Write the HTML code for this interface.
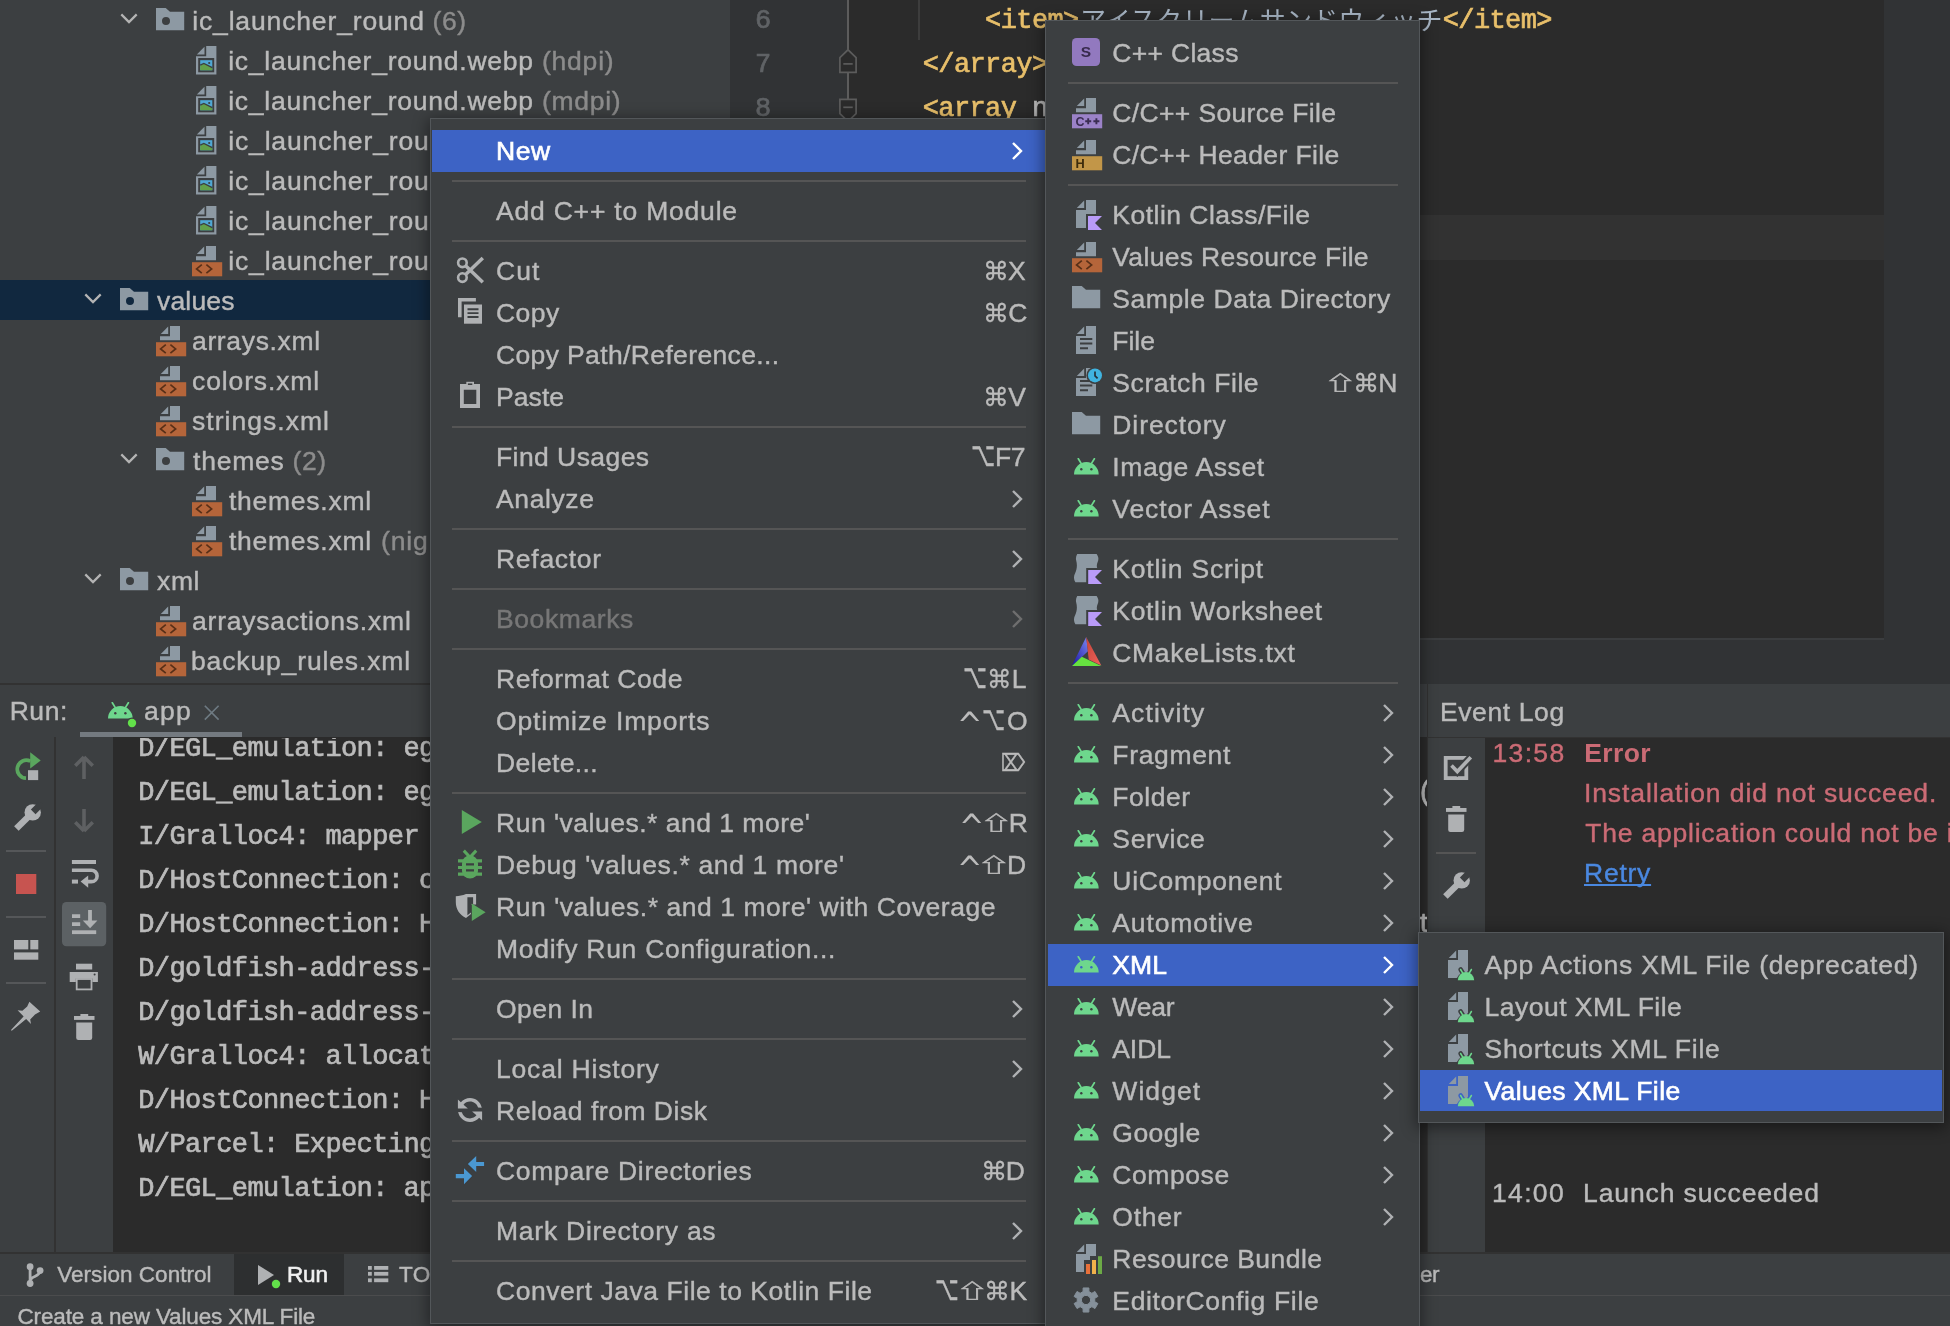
<!DOCTYPE html>
<html><head><meta charset="utf-8"><title>Android Studio</title>
<style>
html,body{margin:0;padding:0;background:#3c3f41;overflow:hidden;}
#root{position:relative;width:1950px;height:1326px;overflow:hidden;background:#3c3f41;font-family:'Liberation Sans', 'DejaVu Sans', sans-serif;will-change:transform;}
#root div,#root svg,#root span{position:absolute;}
#root div div, #root div span, #root div svg{position:absolute;}
.t{white-space:pre;line-height:40px;height:40px;-webkit-text-stroke:.42px;}
.g{white-space:pre;}
</style></head><body><div id="root">
<div style="left:0px;top:0px;width:730px;height:684px;background:#3c3f41;"></div>
<div style="left:0px;top:280px;width:730px;height:40px;background:#11283f;"></div>
<span class="t" style="left:192.20px;top:1.12px;font-size:26.5px;color:#bbbbbb;letter-spacing:0.856px;">ic_launcher_round</span>
<span class="t" style="left:432.60px;top:1.12px;font-size:26.5px;color:#8c8c8c;letter-spacing:0.500px;">(6)</span>
<span class="t" style="left:228.20px;top:41.12px;font-size:26.5px;color:#bbbbbb;letter-spacing:0.767px;">ic_launcher_round.webp</span>
<span class="t" style="left:541.90px;top:41.12px;font-size:26.5px;color:#8c8c8c;letter-spacing:0.800px;">(hdpi)</span>
<span class="t" style="left:228.20px;top:81.12px;font-size:26.5px;color:#bbbbbb;letter-spacing:0.767px;">ic_launcher_round.webp</span>
<span class="t" style="left:541.90px;top:81.12px;font-size:26.5px;color:#8c8c8c;letter-spacing:0.740px;">(mdpi)</span>
<span class="t" style="left:228.20px;top:121.12px;font-size:26.5px;color:#bbbbbb;letter-spacing:0.856px;">ic_launcher_round</span>
<span class="t" style="left:458.00px;top:121.12px;font-size:26.5px;color:#8c8c8c;letter-spacing:0.850px;">.webp (xhdpi)</span>
<span class="t" style="left:228.20px;top:161.12px;font-size:26.5px;color:#bbbbbb;letter-spacing:0.856px;">ic_launcher_round</span>
<span class="t" style="left:458.00px;top:161.12px;font-size:26.5px;color:#8c8c8c;letter-spacing:0.850px;">.webp (xxhdpi)</span>
<span class="t" style="left:228.20px;top:201.12px;font-size:26.5px;color:#bbbbbb;letter-spacing:0.856px;">ic_launcher_round</span>
<span class="t" style="left:458.00px;top:201.12px;font-size:26.5px;color:#8c8c8c;letter-spacing:0.850px;">.webp (xxxhdpi)</span>
<span class="t" style="left:228.20px;top:241.12px;font-size:26.5px;color:#bbbbbb;letter-spacing:0.856px;">ic_launcher_round</span>
<span class="t" style="left:458.00px;top:241.12px;font-size:26.5px;color:#8c8c8c;letter-spacing:0.850px;">.xml (anydpi-v26)</span>
<span class="t" style="left:157.00px;top:281.12px;font-size:26.5px;color:#bbbbbb;letter-spacing:0.180px;">values</span>
<span class="t" style="left:192.00px;top:321.12px;font-size:26.5px;color:#bbbbbb;letter-spacing:0.656px;">arrays.xml</span>
<span class="t" style="left:192.00px;top:361.12px;font-size:26.5px;color:#bbbbbb;letter-spacing:0.878px;">colors.xml</span>
<span class="t" style="left:192.00px;top:401.12px;font-size:26.5px;color:#bbbbbb;letter-spacing:1.030px;">strings.xml</span>
<span class="t" style="left:193.00px;top:441.12px;font-size:26.5px;color:#bbbbbb;letter-spacing:0.780px;">themes</span>
<span class="t" style="left:292.60px;top:441.12px;font-size:26.5px;color:#8c8c8c;letter-spacing:0.500px;">(2)</span>
<span class="t" style="left:229.00px;top:481.12px;font-size:26.5px;color:#bbbbbb;letter-spacing:0.733px;">themes.xml</span>
<span class="t" style="left:229.00px;top:521.12px;font-size:26.5px;color:#bbbbbb;letter-spacing:0.733px;">themes.xml</span>
<span class="t" style="left:381.00px;top:521.12px;font-size:26.5px;color:#8c8c8c;letter-spacing:0.850px;">(night)</span>
<span class="t" style="left:157.00px;top:561.12px;font-size:26.5px;color:#bbbbbb;letter-spacing:0.650px;">xml</span>
<span class="t" style="left:192.00px;top:601.12px;font-size:26.5px;color:#bbbbbb;letter-spacing:0.788px;">arraysactions.xml</span>
<span class="t" style="left:191.00px;top:641.12px;font-size:26.5px;color:#bbbbbb;letter-spacing:0.860px;">backup_rules.xml</span>
<div style="left:730px;top:0px;width:118px;height:639px;background:#313335;"></div>
<div style="left:848px;top:0px;width:1036px;height:639px;background:#2b2b2b;"></div>
<div style="left:848px;top:215px;width:1036px;height:45px;background:#323232;"></div>
<div style="left:1884px;top:0px;width:66px;height:684px;background:#313335;"></div>
<div style="left:730px;top:639px;width:1154px;height:45px;background:#313335;"></div>
<div style="left:730px;top:638px;width:1154px;height:1.5px;background:#3b3d3f;"></div>
<div style="left:847.3px;top:0px;width:1.5px;height:118px;background:#5c5c5c;"></div>
<div style="left:918.4px;top:0px;width:1.2px;height:39.5px;background:#3d3d3d;"></div>
<svg style="left:836px;top:46px" width="24" height="74" viewBox="0 0 24 74"><path d="M3.9 26.4V11.6L12 3.8l8.1 7.8v14.8z" fill="#2b2b2b" stroke="#5c5c5c" stroke-width="1.7"/><path d="M7.3 17.9h9.4" stroke="#5c5c5c" stroke-width="1.7"/><path d="M3.9 53.4v14.2l8.1 7.8 8.1-7.8V53.4z" fill="#2b2b2b" stroke="#5c5c5c" stroke-width="1.7"/><path d="M7.3 61.3h9.4" stroke="#5c5c5c" stroke-width="1.7"/></svg>
<span class="t" style="left:755.00px;top:1.10px;font-size:27px;color:#606366;letter-spacing:-0.603px;font-family:'Liberation Mono', 'Noto Sans CJK JP', monospace;-webkit-text-stroke:.7px;">6</span>
<span class="t" style="left:755.00px;top:45.10px;font-size:27px;color:#606366;letter-spacing:-0.603px;font-family:'Liberation Mono', 'Noto Sans CJK JP', monospace;-webkit-text-stroke:.7px;">7</span>
<span class="t" style="left:755.00px;top:89.10px;font-size:27px;color:#606366;letter-spacing:-0.603px;font-family:'Liberation Mono', 'Noto Sans CJK JP', monospace;-webkit-text-stroke:.7px;">8</span>
<span class="t" style="left:985.10px;top:1.10px;font-size:27px;color:#e8bf6a;letter-spacing:-0.603px;font-family:'Liberation Mono', 'Noto Sans CJK JP', monospace;-webkit-text-stroke:.7px;">&lt;item&gt;</span>
<span class="t" style="left:1080.00px;top:-0.71px;font-size:26px;color:#a9b7c6;letter-spacing:0.100px;font-family:'Noto Sans CJK JP', sans-serif;-webkit-text-stroke:0;">アイスクリームサンドウィッチ</span>
<span class="t" style="left:1442.70px;top:1.10px;font-size:27px;color:#e8bf6a;letter-spacing:-0.603px;font-family:'Liberation Mono', 'Noto Sans CJK JP', monospace;-webkit-text-stroke:.7px;">&lt;/item&gt;</span>
<span class="t" style="left:922.70px;top:45.10px;font-size:27px;color:#e8bf6a;letter-spacing:-0.603px;font-family:'Liberation Mono', 'Noto Sans CJK JP', monospace;-webkit-text-stroke:.7px;">&lt;/array&gt;</span>
<span class="t" style="left:922.70px;top:89.10px;font-size:27px;color:#e8bf6a;letter-spacing:-0.603px;font-family:'Liberation Mono', 'Noto Sans CJK JP', monospace;-webkit-text-stroke:.7px;">&lt;array</span>
<span class="t" style="left:1031.90px;top:89.10px;font-size:27px;color:#bababa;letter-spacing:-0.603px;font-family:'Liberation Mono', 'Noto Sans CJK JP', monospace;-webkit-text-stroke:.7px;">name=&quot;icecream_actions&quot;&gt;</span>
<div style="left:0px;top:683px;width:1420px;height:1.5px;background:#323232;"></div>
<div style="left:0px;top:684.5px;width:1420px;height:52px;background:#3c3f41;"></div>
<div style="left:0px;top:736.5px;width:1420px;height:1px;background:#323232;"></div>
<span class="t" style="left:9.70px;top:691.12px;font-size:26.5px;color:#bbbbbb;letter-spacing:0.533px;">Run:</span>
<span class="t" style="left:144.00px;top:691.12px;font-size:26.5px;color:#bbbbbb;letter-spacing:1.250px;">app</span>
<div style="left:80px;top:732.2px;width:162px;height:5.6px;background:#747a80;"></div>
<div style="left:0px;top:737px;width:113px;height:515px;background:#3c3f41;"></div>
<div style="left:54px;top:737px;width:1.5px;height:515px;background:#323232;"></div>
<div style="left:112.5px;top:737px;width:1314.5px;height:515px;background:#2b2b2b;"></div>
<div style="left:113px;top:738px;width:1314px;height:514px;overflow:hidden">
<span class="t" style="left:25.20px;top:-8.90px;font-size:27px;color:#bbbbbb;letter-spacing:-0.603px;font-family:'Liberation Mono', 'Noto Sans CJK JP', monospace;-webkit-text-stroke:.7px;">D/EGL_emulation: eglMakeCurrent: 0xf0b5e1c0: ver 2 0 (tinfo 0xf0ea3e50)</span>
<span class="t" style="left:25.20px;top:35.10px;font-size:27px;color:#bbbbbb;letter-spacing:-0.603px;font-family:'Liberation Mono', 'Noto Sans CJK JP', monospace;-webkit-text-stroke:.7px;">D/EGL_emulation: eglCreateContext: 0xf0b5e230: maj 2 min 0 rcv 2 share_ctx 0x0 ver(first</span>
<span class="t" style="left:25.20px;top:79.10px;font-size:27px;color:#bbbbbb;letter-spacing:-0.603px;font-family:'Liberation Mono', 'Noto Sans CJK JP', monospace;-webkit-text-stroke:.7px;">I/Gralloc4: mapper 4.x is not supported</span>
<span class="t" style="left:25.20px;top:123.10px;font-size:27px;color:#bbbbbb;letter-spacing:-0.603px;font-family:'Liberation Mono', 'Noto Sans CJK JP', monospace;-webkit-text-stroke:.7px;">D/HostConnection: createUnique: call</span>
<span class="t" style="left:25.20px;top:167.10px;font-size:27px;color:#bbbbbb;letter-spacing:-0.603px;font-family:'Liberation Mono', 'Noto Sans CJK JP', monospace;-webkit-text-stroke:.7px;">D/HostConnection: HostConnection::get() New Host Connection established 0xf0b5e460tid</span>
<span class="t" style="left:25.20px;top:211.10px;font-size:27px;color:#bbbbbb;letter-spacing:-0.603px;font-family:'Liberation Mono', 'Noto Sans CJK JP', monospace;-webkit-text-stroke:.7px;">D/goldfish-address-space: allocate: Ask for block of size 0x100</span>
<span class="t" style="left:25.20px;top:255.10px;font-size:27px;color:#bbbbbb;letter-spacing:-0.603px;font-family:'Liberation Mono', 'Noto Sans CJK JP', monospace;-webkit-text-stroke:.7px;">D/goldfish-address-space: allocate: ioctl allocate returned offset</span>
<span class="t" style="left:25.20px;top:299.10px;font-size:27px;color:#bbbbbb;letter-spacing:-0.603px;font-family:'Liberation Mono', 'Noto Sans CJK JP', monospace;-webkit-text-stroke:.7px;">W/Gralloc4: allocator 4.x is not supported</span>
<span class="t" style="left:25.20px;top:343.10px;font-size:27px;color:#bbbbbb;letter-spacing:-0.603px;font-family:'Liberation Mono', 'Noto Sans CJK JP', monospace;-webkit-text-stroke:.7px;">D/HostConnection: HostComposition ext ANDROID_EMU_CHECKSUM_HELPER_v1</span>
<span class="t" style="left:25.20px;top:387.10px;font-size:27px;color:#bbbbbb;letter-spacing:-0.603px;font-family:'Liberation Mono', 'Noto Sans CJK JP', monospace;-webkit-text-stroke:.7px;">W/Parcel: Expecting binder but got null!</span>
<span class="t" style="left:25.20px;top:431.10px;font-size:27px;color:#bbbbbb;letter-spacing:-0.603px;font-family:'Liberation Mono', 'Noto Sans CJK JP', monospace;-webkit-text-stroke:.7px;">D/EGL_emulation: app_time_stats: avg=1.22ms min=0.5ms max=5ms count=60</span>
</div>
<div style="left:1420px;top:684px;width:8px;height:53px;background:#3c3f41;"></div>
<div style="left:1426.6px;top:684px;width:1.4px;height:568px;background:#323232;"></div>
<div style="left:1428px;top:684px;width:522px;height:53px;background:#3c3f41;"></div>
<div style="left:1428px;top:736.5px;width:522px;height:1.2px;background:#323232;"></div>
<span class="t" style="left:1439.90px;top:692.12px;font-size:26.5px;color:#bbbbbb;letter-spacing:0.612px;">Event Log</span>
<div style="left:1428px;top:737.7px;width:57px;height:515px;background:#3c3f41;"></div>
<div style="left:1485px;top:737.7px;width:465px;height:515px;background:#2b2b2b;"></div>
<span class="t" style="left:1492.50px;top:733.12px;font-size:26.5px;color:#cb6b75;letter-spacing:1.325px;">13:58</span>
<span class="t" style="left:1584.30px;top:733.12px;font-size:26.5px;color:#cb6b75;letter-spacing:0.375px;font-weight:700;-webkit-text-stroke:0;">Error</span>
<span class="t" style="left:1583.90px;top:773.12px;font-size:26.5px;color:#cb6b75;letter-spacing:0.907px;">Installation did not succeed.</span>
<span class="t" style="left:1585.30px;top:813.12px;font-size:26.5px;color:#cb6b75;letter-spacing:0.780px;">The application could not be installed: INSTALL_FAILED</span>
<span class="t" style="left:1584.00px;top:853.12px;font-size:26.5px;color:#4a88e0;letter-spacing:0.750px;text-decoration:underline;text-decoration-thickness:2px;text-underline-offset:1.5px;text-decoration-skip-ink:none;">Retry</span>
<span class="t" style="left:1492.00px;top:1173.12px;font-size:26.5px;color:#bbbbbb;letter-spacing:1.325px;">14:00</span>
<span class="t" style="left:1583.10px;top:1173.12px;font-size:26.5px;color:#bbbbbb;letter-spacing:0.887px;">Launch succeeded</span>
<div style="left:1436px;top:852px;width:40px;height:1.5px;background:#555555;"></div>
<div style="left:0px;top:1252px;width:1950px;height:1.5px;background:#323232;"></div>
<div style="left:0px;top:1253.5px;width:1950px;height:42px;background:#3c3f41;"></div>
<div style="left:234.4px;top:1253.5px;width:109.2px;height:41.5px;background:#2d2f30;"></div>
<span class="t" style="left:57.20px;top:1254.50px;font-size:22.5px;color:#bbbbbb;letter-spacing:0.043px;">Version Control</span>
<span class="t" style="left:286.90px;top:1254.50px;font-size:22.5px;color:#f0f0f0;letter-spacing:-0.050px;-webkit-text-stroke:.6px;">Run</span>
<span class="t" style="left:398.90px;top:1254.50px;font-size:22.5px;color:#bbbbbb;letter-spacing:0.600px;">TODO</span>
<span class="t" style="left:1370.50px;top:1254.50px;font-size:22.5px;color:#bbbbbb;letter-spacing:-0.314px;">Profiler</span>
<div style="left:0px;top:1295px;width:1950px;height:1px;background:#4b4c4d;"></div>
<div style="left:0px;top:1297px;width:1950px;height:29px;background:#3c3f41;"></div>
<span class="t" style="left:17.50px;top:1296.50px;font-size:22.5px;color:#bbbbbb;letter-spacing:-0.130px;">Create a new Values XML File</span>
<svg style="left:118px;top:8px;" width="22" height="20" viewBox="0 0 22 20"><path d="M3.3 6.4L11 14.1l7.7-7.7" fill="none" stroke="#b4b4b4" stroke-width="2.2"/></svg>
<svg style="left:156px;top:8px;" width="29" height="23" viewBox="0 0 29 23"><path d="M0 0H9.7L14 3.7H28.2V22.2H0ZM14 12.9a4 4 0 1 0-8 0a4 4 0 1 0 8 0Z" fill="#8d99a3" fill-rule="evenodd"/></svg>
<svg style="left:195.8px;top:45.8px;" width="21" height="29" viewBox="0 0 21 29"><path d="M10.2 0H20.4V28.4H0V10.2H10.2Z" fill="#8d99a3"/><path d="M8.5 .8V8.5H.8Z" fill="#8d99a3"/><rect x="2.2" y="12" width="16" height="14.3" fill="#3c3f41"/><rect x="4.2" y="14.2" width="12.1" height="10.1" fill="#4fa8d4"/><path d="M4.2 19.4L7.8 17.6L16.3 21.9V24.3H4.2Z" fill="#62a04a"/><path d="M4.2 19.2L7.8 17.4L16.3 21.7" fill="none" stroke="#3c3f41" stroke-width="1.3"/><circle cx="13.2" cy="17" r="1.1" fill="#3c3f41"/></svg>
<svg style="left:195.8px;top:85.8px;" width="21" height="29" viewBox="0 0 21 29"><path d="M10.2 0H20.4V28.4H0V10.2H10.2Z" fill="#8d99a3"/><path d="M8.5 .8V8.5H.8Z" fill="#8d99a3"/><rect x="2.2" y="12" width="16" height="14.3" fill="#3c3f41"/><rect x="4.2" y="14.2" width="12.1" height="10.1" fill="#4fa8d4"/><path d="M4.2 19.4L7.8 17.6L16.3 21.9V24.3H4.2Z" fill="#62a04a"/><path d="M4.2 19.2L7.8 17.4L16.3 21.7" fill="none" stroke="#3c3f41" stroke-width="1.3"/><circle cx="13.2" cy="17" r="1.1" fill="#3c3f41"/></svg>
<svg style="left:195.8px;top:125.8px;" width="21" height="29" viewBox="0 0 21 29"><path d="M10.2 0H20.4V28.4H0V10.2H10.2Z" fill="#8d99a3"/><path d="M8.5 .8V8.5H.8Z" fill="#8d99a3"/><rect x="2.2" y="12" width="16" height="14.3" fill="#3c3f41"/><rect x="4.2" y="14.2" width="12.1" height="10.1" fill="#4fa8d4"/><path d="M4.2 19.4L7.8 17.6L16.3 21.9V24.3H4.2Z" fill="#62a04a"/><path d="M4.2 19.2L7.8 17.4L16.3 21.7" fill="none" stroke="#3c3f41" stroke-width="1.3"/><circle cx="13.2" cy="17" r="1.1" fill="#3c3f41"/></svg>
<svg style="left:195.8px;top:165.8px;" width="21" height="29" viewBox="0 0 21 29"><path d="M10.2 0H20.4V28.4H0V10.2H10.2Z" fill="#8d99a3"/><path d="M8.5 .8V8.5H.8Z" fill="#8d99a3"/><rect x="2.2" y="12" width="16" height="14.3" fill="#3c3f41"/><rect x="4.2" y="14.2" width="12.1" height="10.1" fill="#4fa8d4"/><path d="M4.2 19.4L7.8 17.6L16.3 21.9V24.3H4.2Z" fill="#62a04a"/><path d="M4.2 19.2L7.8 17.4L16.3 21.7" fill="none" stroke="#3c3f41" stroke-width="1.3"/><circle cx="13.2" cy="17" r="1.1" fill="#3c3f41"/></svg>
<svg style="left:195.8px;top:205.8px;" width="21" height="29" viewBox="0 0 21 29"><path d="M10.2 0H20.4V28.4H0V10.2H10.2Z" fill="#8d99a3"/><path d="M8.5 .8V8.5H.8Z" fill="#8d99a3"/><rect x="2.2" y="12" width="16" height="14.3" fill="#3c3f41"/><rect x="4.2" y="14.2" width="12.1" height="10.1" fill="#4fa8d4"/><path d="M4.2 19.4L7.8 17.6L16.3 21.9V24.3H4.2Z" fill="#62a04a"/><path d="M4.2 19.2L7.8 17.4L16.3 21.7" fill="none" stroke="#3c3f41" stroke-width="1.3"/><circle cx="13.2" cy="17" r="1.1" fill="#3c3f41"/></svg>
<svg style="left:192px;top:245.8px;" width="31" height="31" viewBox="0 0 31 31"><path d="M14 0H24V14.2H4V10.2H14Z" fill="#8d99a3"/><path d="M12.2 .6V8H4.8Z" fill="#8d99a3"/><rect x="0" y="16.2" width="30.2" height="14.1" fill="#b5653a"/><path d="M9.8 18.7L4.6 22.9l5.2 4.2M14.4 18.7l5.2 4.2-5.2 4.2" fill="none" stroke="#40220f" stroke-opacity=".8" stroke-width="1.7"/></svg>
<svg style="left:82px;top:288px;" width="22" height="20" viewBox="0 0 22 20"><path d="M3.3 6.4L11 14.1l7.7-7.7" fill="none" stroke="#b4b4b4" stroke-width="2.2"/></svg>
<svg style="left:120px;top:288px;" width="29" height="23" viewBox="0 0 29 23"><path d="M0 0H9.7L14 3.7H28.2V22.2H0ZM14 12.9a4 4 0 1 0-8 0a4 4 0 1 0 8 0Z" fill="#8d99a3" fill-rule="evenodd"/></svg>
<svg style="left:156px;top:325.8px;" width="31" height="31" viewBox="0 0 31 31"><path d="M14 0H24V14.2H4V10.2H14Z" fill="#8d99a3"/><path d="M12.2 .6V8H4.8Z" fill="#8d99a3"/><rect x="0" y="16.2" width="30.2" height="14.1" fill="#b5653a"/><path d="M9.8 18.7L4.6 22.9l5.2 4.2M14.4 18.7l5.2 4.2-5.2 4.2" fill="none" stroke="#40220f" stroke-opacity=".8" stroke-width="1.7"/></svg>
<svg style="left:156px;top:365.8px;" width="31" height="31" viewBox="0 0 31 31"><path d="M14 0H24V14.2H4V10.2H14Z" fill="#8d99a3"/><path d="M12.2 .6V8H4.8Z" fill="#8d99a3"/><rect x="0" y="16.2" width="30.2" height="14.1" fill="#b5653a"/><path d="M9.8 18.7L4.6 22.9l5.2 4.2M14.4 18.7l5.2 4.2-5.2 4.2" fill="none" stroke="#40220f" stroke-opacity=".8" stroke-width="1.7"/></svg>
<svg style="left:156px;top:405.8px;" width="31" height="31" viewBox="0 0 31 31"><path d="M14 0H24V14.2H4V10.2H14Z" fill="#8d99a3"/><path d="M12.2 .6V8H4.8Z" fill="#8d99a3"/><rect x="0" y="16.2" width="30.2" height="14.1" fill="#b5653a"/><path d="M9.8 18.7L4.6 22.9l5.2 4.2M14.4 18.7l5.2 4.2-5.2 4.2" fill="none" stroke="#40220f" stroke-opacity=".8" stroke-width="1.7"/></svg>
<svg style="left:118px;top:448px;" width="22" height="20" viewBox="0 0 22 20"><path d="M3.3 6.4L11 14.1l7.7-7.7" fill="none" stroke="#b4b4b4" stroke-width="2.2"/></svg>
<svg style="left:156px;top:448px;" width="29" height="23" viewBox="0 0 29 23"><path d="M0 0H9.7L14 3.7H28.2V22.2H0ZM14 12.9a4 4 0 1 0-8 0a4 4 0 1 0 8 0Z" fill="#8d99a3" fill-rule="evenodd"/></svg>
<svg style="left:192px;top:485.8px;" width="31" height="31" viewBox="0 0 31 31"><path d="M14 0H24V14.2H4V10.2H14Z" fill="#8d99a3"/><path d="M12.2 .6V8H4.8Z" fill="#8d99a3"/><rect x="0" y="16.2" width="30.2" height="14.1" fill="#b5653a"/><path d="M9.8 18.7L4.6 22.9l5.2 4.2M14.4 18.7l5.2 4.2-5.2 4.2" fill="none" stroke="#40220f" stroke-opacity=".8" stroke-width="1.7"/></svg>
<svg style="left:192px;top:525.8px;" width="31" height="31" viewBox="0 0 31 31"><path d="M14 0H24V14.2H4V10.2H14Z" fill="#8d99a3"/><path d="M12.2 .6V8H4.8Z" fill="#8d99a3"/><rect x="0" y="16.2" width="30.2" height="14.1" fill="#b5653a"/><path d="M9.8 18.7L4.6 22.9l5.2 4.2M14.4 18.7l5.2 4.2-5.2 4.2" fill="none" stroke="#40220f" stroke-opacity=".8" stroke-width="1.7"/></svg>
<svg style="left:82px;top:568px;" width="22" height="20" viewBox="0 0 22 20"><path d="M3.3 6.4L11 14.1l7.7-7.7" fill="none" stroke="#b4b4b4" stroke-width="2.2"/></svg>
<svg style="left:120px;top:568px;" width="29" height="23" viewBox="0 0 29 23"><path d="M0 0H9.7L14 3.7H28.2V22.2H0ZM14 12.9a4 4 0 1 0-8 0a4 4 0 1 0 8 0Z" fill="#8d99a3" fill-rule="evenodd"/></svg>
<svg style="left:156px;top:605.8px;" width="31" height="31" viewBox="0 0 31 31"><path d="M14 0H24V14.2H4V10.2H14Z" fill="#8d99a3"/><path d="M12.2 .6V8H4.8Z" fill="#8d99a3"/><rect x="0" y="16.2" width="30.2" height="14.1" fill="#b5653a"/><path d="M9.8 18.7L4.6 22.9l5.2 4.2M14.4 18.7l5.2 4.2-5.2 4.2" fill="none" stroke="#40220f" stroke-opacity=".8" stroke-width="1.7"/></svg>
<svg style="left:156px;top:645.8px;" width="31" height="31" viewBox="0 0 31 31"><path d="M14 0H24V14.2H4V10.2H14Z" fill="#8d99a3"/><path d="M12.2 .6V8H4.8Z" fill="#8d99a3"/><rect x="0" y="16.2" width="30.2" height="14.1" fill="#b5653a"/><path d="M9.8 18.7L4.6 22.9l5.2 4.2M14.4 18.7l5.2 4.2-5.2 4.2" fill="none" stroke="#40220f" stroke-opacity=".8" stroke-width="1.7"/></svg>
<svg style="left:107.7px;top:701.8px;" width="25.2" height="16.9" viewBox="0 0 25.2 16.9"><g transform="scale(1)"><path d="M0 16.4A12.35 12.4 0 0 1 24.7 16.4Z" fill="#6ed78d"/><path d="M4.3 .7L8.4 7.4M20.4 .7L16.3 7.4" stroke="#6ed78d" stroke-width="1.7" stroke-linecap="round"/><circle cx="7.3" cy="11.2" r="1.2" fill="#3c3f41"/><circle cx="17.4" cy="11.2" r="1.2" fill="#3c3f41"/></g></svg>
<svg style="left:125px;top:715.5px;" width="14" height="14" viewBox="0 0 14 14"><circle cx="7" cy="7" r="5.6" fill="#3c3f41"/><circle cx="7" cy="7" r="4.2" fill="#62e04a"/></svg>
<svg style="left:204.4px;top:704.6px;" width="16" height="16" viewBox="0 0 16 16"><path d="M.8 .8L14.6 14.6M14.6 .8L.8 14.6" stroke="#6e7a82" stroke-width="1.6"/></svg>
<svg style="left:11px;top:750px;" width="32" height="32" viewBox="0 0 32 32"><path d="M15 28.2A9 9 0 1 1 19.4 11.2" fill="none" stroke="#5aa65e" stroke-width="3.7"/><path d="M19.2 2.3L29.7 10.5L19.2 18.6Z" fill="#5aa65e"/><rect x="17" y="20.2" width="10.2" height="9.9" fill="#afb1b3"/></svg>
<svg style="left:10.8px;top:801.6px;" width="32" height="32" viewBox="0 0 32 32"><path d="M18.6 13.4L5.4 26.6" stroke="#afb1b3" stroke-width="6.4" fill="none"/><circle cx="21.7" cy="10.4" r="8.2" fill="#afb1b3"/><path d="M22.2 9.9L31 1.1" stroke="#3c3f41" stroke-width="6.6"/></svg>
<div style="left:6px;top:850.2px;width:40px;height:1.8px;background:#555759;"></div>
<svg style="left:15.9px;top:874px;" width="21" height="21" viewBox="0 0 21 21"><rect width="20.3" height="20" fill="#c75450"/></svg>
<div style="left:6px;top:915.9px;width:40px;height:1.8px;background:#555759;"></div>
<svg style="left:13.9px;top:940.1px;" width="25" height="20" viewBox="0 0 25 20"><rect x="0" y="0" width="14.3" height="9.4" fill="#afb1b3"/><rect x="16.3" y="0" width="8" height="9.4" fill="#afb1b3"/><rect x="0" y="12.4" width="24.3" height="7.3" fill="#afb1b3"/></svg>
<div style="left:6px;top:982.1px;width:40px;height:1.8px;background:#555759;"></div>
<svg style="left:11px;top:1001.4px;" width="30" height="30" viewBox="0 0 30 30"><path d="M18.4 .8L29.2 10.6L24 13.4L19.2 18.6L20 23L6.6 9.2L11.4 9.8L16.2 5.4Z" fill="#afb1b3"/><path d="M14.6 14.2L.4 29.4L1.6 28.4L16.4 16.2Z" fill="#afb1b3" stroke="#afb1b3" stroke-width="1.2"/></svg>
<svg style="left:74px;top:754.3px;" width="20" height="25" viewBox="0 0 20 25"><path d="M10 3L1.2 11.8M10 3L18.8 11.8M10 3.5V25" fill="none" stroke="#5e6062" stroke-width="3.6"/></svg>
<svg style="left:74px;top:809px;" width="20" height="25" viewBox="0 0 20 25"><path d="M10 22L1.2 13.2M10 22L18.8 13.2M10 21.5V0" fill="none" stroke="#5e6062" stroke-width="3.6"/></svg>
<svg style="left:70px;top:858px;" width="30" height="32" viewBox="0 0 30 32"><path d="M1.9 4H26" stroke="#afb1b3" stroke-width="4"/><path d="M1.9 12.2H21.4A5.7 5.7 0 0 1 21.4 23.6H16" fill="none" stroke="#afb1b3" stroke-width="3.6"/><path d="M18.2 17.4V29.8L10.6 23.6Z" fill="#afb1b3"/><path d="M1.9 23.6H8" stroke="#afb1b3" stroke-width="4"/></svg>
<svg style="left:62px;top:902px;" width="45" height="45" viewBox="0 0 45 45"><rect x="0" y="0" width="44.2" height="44.2" rx="4.4" fill="#5c6164"/><path d="M10 14.2H18.2M10 22.2H18.2" stroke="#afb1b3" stroke-width="3.8"/><path d="M10 30.2H34.2" stroke="#afb1b3" stroke-width="3.8"/><path d="M28 8V19" stroke="#afb1b3" stroke-width="3.8"/><path d="M20.8 18.4H35.4L28.1 26.2Z" fill="#afb1b3"/></svg>
<svg style="left:69px;top:963px;" width="30" height="28" viewBox="0 0 30 28"><rect x="7" y=".7" width="16.2" height="5.8" fill="#afb1b3"/><path d="M.7 9H28.9V19H23.4V15.4H6.8V19H.7Z" fill="#afb1b3"/><rect x="7.7" y="16" width="14.8" height="10.4" fill="none" stroke="#afb1b3" stroke-width="1.8"/><circle cx="25.6" cy="11.6" r="1" fill="#3c3f41"/></svg>
<svg style="left:73.8px;top:1013.6px;" width="21" height="27" viewBox="0 0 21 27"><rect x="6.4" y="0" width="7.8" height="3" fill="#afb1b3"/><rect x="0" y="2" width="20.5" height="3.9" fill="#afb1b3"/><path d="M2.2 8.4H18.2V23.8A2.2 2.2 0 0 1 16 26H4.4A2.2 2.2 0 0 1 2.2 23.8Z" fill="#afb1b3"/></svg>
<svg style="left:1441.6px;top:755px;" width="31" height="27" viewBox="0 0 31 27"><rect x="3.7" y="2.9" width="20.6" height="20.2" fill="none" stroke="#afb1b3" stroke-width="3.8"/><path d="M9.5 10.6L15.3 16.6L28.8 2.2" fill="none" stroke="#3c3f41" stroke-width="7.6"/><path d="M9.5 10.6L15.3 16.6L28.8 2.2" fill="none" stroke="#afb1b3" stroke-width="3.6"/></svg>
<svg style="left:1445.8px;top:805.9px;" width="21" height="27" viewBox="0 0 21 27"><rect x="6.4" y="0" width="7.8" height="3" fill="#afb1b3"/><rect x="0" y="2" width="20.5" height="3.9" fill="#afb1b3"/><path d="M2.2 8.4H18.2V23.8A2.2 2.2 0 0 1 16 26H4.4A2.2 2.2 0 0 1 2.2 23.8Z" fill="#afb1b3"/></svg>
<svg style="left:1440.4px;top:869.6px;" width="32" height="32" viewBox="0 0 32 32"><path d="M18.6 13.4L5.4 26.6" stroke="#afb1b3" stroke-width="6.4" fill="none"/><circle cx="21.7" cy="10.4" r="8.2" fill="#afb1b3"/><path d="M22.2 9.9L31 1.1" stroke="#3c3f41" stroke-width="6.6"/></svg>
<svg style="left:25.8px;top:1262px;" width="19" height="26" viewBox="0 0 19 26"><circle cx="4.1" cy="4.7" r="3.4" fill="#afb1b3"/><circle cx="4.1" cy="21.5" r="3.4" fill="#afb1b3"/><circle cx="14.1" cy="8.6" r="3.4" fill="#afb1b3"/><path d="M4.1 4.7V21.5M14.1 8.6C14.1 15.6 4.1 13.4 4.1 19.4" fill="none" stroke="#afb1b3" stroke-width="2.8"/></svg>
<svg style="left:257.9px;top:1264.8px;" width="17" height="21" viewBox="0 0 17 21"><path d="M0 0L16 9.9L0 20Z" fill="#afb1b3"/></svg>
<svg style="left:269px;top:1277.2px;" width="14" height="14" viewBox="0 0 14 14"><circle cx="7" cy="7" r="5.6" fill="#2e3031"/><circle cx="7" cy="7" r="4.2" fill="#62e04a"/></svg>
<svg style="left:367.9px;top:1266.4px;" width="21" height="17" viewBox="0 0 21 17"><rect x="0" y="0" width="3.8" height="3.8" fill="#afb1b3"/><rect x="6.1" y="0" width="14.2" height="3.8" fill="#afb1b3"/><rect x="0" y="5.9" width="3.8" height="3.8" fill="#afb1b3"/><rect x="6.1" y="5.9" width="14.2" height="3.8" fill="#afb1b3"/><rect x="0" y="12.4" width="3.8" height="3.8" fill="#afb1b3"/><rect x="6.1" y="12.4" width="14.2" height="3.8" fill="#afb1b3"/></svg>
<div style="left:429.5px;top:118px;width:618px;height:1205.5px;background:#3c3f41;box-shadow:0 3px 14px 2px rgba(0,0,0,.42);border:1.3px solid #53575a;box-sizing:border-box"></div>
<div style="left:432px;top:130px;width:614.5px;height:42px;background:#3d63c5;"></div>
<span class="t" style="left:496.00px;top:131.12px;font-size:26.5px;color:#ffffff;letter-spacing:0.500px;-webkit-text-stroke:.65px;">New</span>
<svg style="left:1009.5px;top:140px" width="14" height="22" viewBox="0 0 14 22"><path d="M3 3l8 8-8 8" fill="none" stroke="#ffffff" stroke-width="2.4"/></svg>
<div style="left:452px;top:180px;width:574px;height:2px;background:#555555;"></div>
<span class="t" style="left:496.00px;top:191.12px;font-size:26.5px;color:#bbbbbb;letter-spacing:0.794px;">Add C++ to Module</span>
<div style="left:452px;top:240px;width:574px;height:2px;background:#555555;"></div>
<span class="t" style="left:496.00px;top:251.12px;font-size:26.5px;color:#bbbbbb;letter-spacing:1.000px;">Cut</span>
<span class="g" style="left:983.33px;top:257.49px;font-family:'DejaVu Sans', sans-serif;font-size:27px;line-height:30px;height:30px;color:#bbbbbb;transform-origin:0 0;transform:scale(0.9561,0.9463);-webkit-text-stroke:0.3px #bbbbbb;">⌘</span>
<span class="t" style="left:1007.90px;top:251.12px;font-size:26.5px;color:#bbbbbb;letter-spacing:0.850px;">X</span>
<span class="t" style="left:496.00px;top:293.12px;font-size:26.5px;color:#bbbbbb;letter-spacing:0.433px;">Copy</span>
<span class="g" style="left:983.33px;top:299.49px;font-family:'DejaVu Sans', sans-serif;font-size:27px;line-height:30px;height:30px;color:#bbbbbb;transform-origin:0 0;transform:scale(0.9561,0.9463);-webkit-text-stroke:0.3px #bbbbbb;">⌘</span>
<span class="t" style="left:1008.20px;top:293.12px;font-size:26.5px;color:#bbbbbb;letter-spacing:0.850px;">C</span>
<span class="t" style="left:496.00px;top:335.12px;font-size:26.5px;color:#bbbbbb;letter-spacing:0.367px;">Copy Path/Reference...</span>
<span class="t" style="left:496.00px;top:377.12px;font-size:26.5px;color:#bbbbbb;letter-spacing:0.075px;">Paste</span>
<span class="g" style="left:983.05px;top:383.49px;font-family:'DejaVu Sans', sans-serif;font-size:27px;line-height:30px;height:30px;color:#bbbbbb;transform-origin:0 0;transform:scale(0.9512,0.9463);-webkit-text-stroke:0.3px #bbbbbb;">⌘</span>
<span class="t" style="left:1008.30px;top:377.12px;font-size:26.5px;color:#bbbbbb;letter-spacing:0.850px;">V</span>
<div style="left:452px;top:426px;width:574px;height:2px;background:#555555;"></div>
<span class="t" style="left:496.00px;top:437.12px;font-size:26.5px;color:#bbbbbb;letter-spacing:0.430px;">Find Usages</span>
<span class="g" style="left:970.55px;top:436.16px;font-family:'DejaVu Sans', sans-serif;font-size:27px;line-height:30px;height:30px;color:#bbbbbb;transform-origin:0 0;transform:scale(0.7741,1.2516);-webkit-text-stroke:0.3px #bbbbbb;">⌥</span>
<span class="t" style="left:995.10px;top:437.12px;font-size:26.5px;color:#bbbbbb;letter-spacing:-0.500px;">F7</span>
<span class="t" style="left:496.00px;top:479.12px;font-size:26.5px;color:#bbbbbb;letter-spacing:0.617px;">Analyze</span>
<svg style="left:1009.5px;top:488px" width="14" height="22" viewBox="0 0 14 22"><path d="M3 3l8 8-8 8" fill="none" stroke="#afb1b3" stroke-width="2.4"/></svg>
<div style="left:452px;top:528px;width:574px;height:2px;background:#555555;"></div>
<span class="t" style="left:496.00px;top:539.12px;font-size:26.5px;color:#bbbbbb;letter-spacing:0.714px;">Refactor</span>
<svg style="left:1009.5px;top:548px" width="14" height="22" viewBox="0 0 14 22"><path d="M3 3l8 8-8 8" fill="none" stroke="#afb1b3" stroke-width="2.4"/></svg>
<div style="left:452px;top:588px;width:574px;height:2px;background:#555555;"></div>
<span class="t" style="left:496.00px;top:599.12px;font-size:26.5px;color:#777777;letter-spacing:0.588px;">Bookmarks</span>
<svg style="left:1009.5px;top:608px" width="14" height="22" viewBox="0 0 14 22"><path d="M3 3l8 8-8 8" fill="none" stroke="#6e6e6e" stroke-width="2.4"/></svg>
<div style="left:452px;top:648px;width:574px;height:2px;background:#555555;"></div>
<span class="t" style="left:496.00px;top:659.12px;font-size:26.5px;color:#bbbbbb;letter-spacing:0.558px;">Reformat Code</span>
<span class="g" style="left:962.77px;top:658.16px;font-family:'DejaVu Sans', sans-serif;font-size:27px;line-height:30px;height:30px;color:#bbbbbb;transform-origin:0 0;transform:scale(0.7667,1.2516);-webkit-text-stroke:0.3px #bbbbbb;">⌥</span>
<span class="g" style="left:987.29px;top:665.49px;font-family:'DejaVu Sans', sans-serif;font-size:27px;line-height:30px;height:30px;color:#bbbbbb;transform-origin:0 0;transform:scale(0.9024,0.9463);-webkit-text-stroke:0.3px #bbbbbb;">⌘</span>
<span class="t" style="left:1011.70px;top:659.12px;font-size:26.5px;color:#bbbbbb;letter-spacing:0.850px;">L</span>
<span class="t" style="left:496.00px;top:701.12px;font-size:26.5px;color:#bbbbbb;letter-spacing:0.887px;">Optimize Imports</span>
<span class="g" style="left:956.64px;top:705.36px;font-family:'DejaVu Sans', sans-serif;font-size:27px;line-height:30px;height:30px;color:#bbbbbb;transform-origin:0 0;transform:scale(1.1212,1.3200);">^</span>
<span class="g" style="left:981.82px;top:700.16px;font-family:'DejaVu Sans', sans-serif;font-size:27px;line-height:30px;height:30px;color:#bbbbbb;transform-origin:0 0;transform:scale(0.7407,1.2516);-webkit-text-stroke:0.3px #bbbbbb;">⌥</span>
<span class="t" style="left:1007.00px;top:701.12px;font-size:26.5px;color:#bbbbbb;letter-spacing:0.850px;">O</span>
<span class="t" style="left:496.00px;top:743.12px;font-size:26.5px;color:#bbbbbb;letter-spacing:0.375px;">Delete...</span>
<span class="g" style="left:1000.74px;top:750.19px;font-family:'DejaVu Sans', sans-serif;font-size:27px;line-height:30px;height:30px;color:#bbbbbb;transform-origin:0 0;transform:scale(0.6278,0.8878);-webkit-text-stroke:0.55px #bbbbbb;">⌦</span>
<div style="left:452px;top:792px;width:574px;height:2px;background:#555555;"></div>
<span class="t" style="left:496.00px;top:803.12px;font-size:26.5px;color:#bbbbbb;letter-spacing:0.500px;">Run &#x27;values.* and 1 more&#x27;</span>
<span class="g" style="left:958.84px;top:807.36px;font-family:'DejaVu Sans', sans-serif;font-size:27px;line-height:30px;height:30px;color:#bbbbbb;transform-origin:0 0;transform:scale(1.1212,1.3200);">^</span>
<span class="g" style="left:979.58px;top:810.54px;font-family:'Noto Sans CJK JP', sans-serif;font-size:27px;line-height:30px;height:30px;color:#bbbbbb;transform-origin:0 0;transform:scale(1.2056,0.7320);-webkit-text-stroke:0.7px #bbbbbb;">⇧</span>
<span class="t" style="left:1008.70px;top:803.12px;font-size:26.5px;color:#bbbbbb;letter-spacing:0.850px;">R</span>
<span class="t" style="left:496.00px;top:845.12px;font-size:26.5px;color:#bbbbbb;letter-spacing:0.642px;">Debug &#x27;values.* and 1 more&#x27;</span>
<span class="g" style="left:956.64px;top:849.36px;font-family:'DejaVu Sans', sans-serif;font-size:27px;line-height:30px;height:30px;color:#bbbbbb;transform-origin:0 0;transform:scale(1.1212,1.3200);">^</span>
<span class="g" style="left:976.88px;top:852.54px;font-family:'Noto Sans CJK JP', sans-serif;font-size:27px;line-height:30px;height:30px;color:#bbbbbb;transform-origin:0 0;transform:scale(1.2500,0.7320);-webkit-text-stroke:0.7px #bbbbbb;">⇧</span>
<span class="t" style="left:1007.00px;top:845.12px;font-size:26.5px;color:#bbbbbb;letter-spacing:0.850px;">D</span>
<span class="t" style="left:496.00px;top:887.12px;font-size:26.5px;color:#bbbbbb;letter-spacing:0.553px;">Run &#x27;values.* and 1 more&#x27; with Coverage</span>
<span class="t" style="left:496.00px;top:929.12px;font-size:26.5px;color:#bbbbbb;letter-spacing:0.704px;">Modify Run Configuration...</span>
<div style="left:452px;top:978px;width:574px;height:2px;background:#555555;"></div>
<span class="t" style="left:496.00px;top:989.12px;font-size:26.5px;color:#bbbbbb;letter-spacing:0.450px;">Open In</span>
<svg style="left:1009.5px;top:998px" width="14" height="22" viewBox="0 0 14 22"><path d="M3 3l8 8-8 8" fill="none" stroke="#afb1b3" stroke-width="2.4"/></svg>
<div style="left:452px;top:1038px;width:574px;height:2px;background:#555555;"></div>
<span class="t" style="left:496.00px;top:1049.12px;font-size:26.5px;color:#bbbbbb;letter-spacing:0.808px;">Local History</span>
<svg style="left:1009.5px;top:1058px" width="14" height="22" viewBox="0 0 14 22"><path d="M3 3l8 8-8 8" fill="none" stroke="#afb1b3" stroke-width="2.4"/></svg>
<span class="t" style="left:496.00px;top:1091.12px;font-size:26.5px;color:#bbbbbb;letter-spacing:0.513px;">Reload from Disk</span>
<div style="left:452px;top:1140px;width:574px;height:2px;background:#555555;"></div>
<span class="t" style="left:496.00px;top:1151.12px;font-size:26.5px;color:#bbbbbb;letter-spacing:0.706px;">Compare Directories</span>
<span class="g" style="left:980.80px;top:1157.49px;font-family:'DejaVu Sans', sans-serif;font-size:27px;line-height:30px;height:30px;color:#bbbbbb;transform-origin:0 0;transform:scale(0.9659,0.9463);-webkit-text-stroke:0.3px #bbbbbb;">⌘</span>
<span class="t" style="left:1005.80px;top:1151.12px;font-size:26.5px;color:#bbbbbb;letter-spacing:0.850px;">D</span>
<div style="left:452px;top:1200px;width:574px;height:2px;background:#555555;"></div>
<span class="t" style="left:496.00px;top:1211.12px;font-size:26.5px;color:#bbbbbb;letter-spacing:0.750px;">Mark Directory as</span>
<svg style="left:1009.5px;top:1220px" width="14" height="22" viewBox="0 0 14 22"><path d="M3 3l8 8-8 8" fill="none" stroke="#afb1b3" stroke-width="2.4"/></svg>
<div style="left:452px;top:1260px;width:574px;height:2px;background:#555555;"></div>
<span class="t" style="left:496.00px;top:1271.12px;font-size:26.5px;color:#bbbbbb;letter-spacing:0.539px;">Convert Java File to Kotlin File</span>
<span class="g" style="left:934.78px;top:1270.16px;font-family:'DejaVu Sans', sans-serif;font-size:27px;line-height:30px;height:30px;color:#bbbbbb;transform-origin:0 0;transform:scale(0.7593,1.2516);-webkit-text-stroke:0.3px #bbbbbb;">⌥</span>
<span class="g" style="left:955.58px;top:1278.54px;font-family:'Noto Sans CJK JP', sans-serif;font-size:27px;line-height:30px;height:30px;color:#bbbbbb;transform-origin:0 0;transform:scale(1.2056,0.7320);-webkit-text-stroke:0.7px #bbbbbb;">⇧</span>
<span class="g" style="left:984.43px;top:1277.49px;font-family:'DejaVu Sans', sans-serif;font-size:27px;line-height:30px;height:30px;color:#bbbbbb;transform-origin:0 0;transform:scale(0.9561,0.9463);-webkit-text-stroke:0.3px #bbbbbb;">⌘</span>
<span class="t" style="left:1009.50px;top:1271.12px;font-size:26.5px;color:#bbbbbb;letter-spacing:0.850px;">K</span>
<svg style="left:454px;top:255px;" width="32" height="32" viewBox="0 0 32 32"><g fill="none" stroke="#afb1b3"><circle cx="8.4" cy="7.8" r="4.3" stroke-width="2.6"/><circle cx="8.4" cy="22.6" r="4.3" stroke-width="2.6"/><path d="M11.4 10.6L28.8 27.3M11.4 19.8L28.8 3.1" stroke-width="3.5"/></g></svg>
<svg style="left:454px;top:297px;" width="32" height="32" viewBox="0 0 32 32"><path d="M4 1H21.9V4.6H7.6V20.3H4Z" fill="#afb1b3"/><rect x="10" y="7.5" width="18" height="19.2" fill="#afb1b3"/><path d="M13.5 12.2h11M13.5 16.1h11M13.5 20h11" stroke="#3c3f41" stroke-width="1.9"/></svg>
<svg style="left:454px;top:381px;" width="32" height="32" viewBox="0 0 32 32"><path d="M6 3H26V27H6ZM9.8 8.7V23.1H22.3V8.7Z" fill="#afb1b3" fill-rule="evenodd"/><rect x="12.3" y=".8" width="7.7" height="4.4" fill="#afb1b3"/><rect x="13.9" y="2.4" width="4.4" height="1.6" fill="#3c3f41"/></svg>
<svg style="left:454px;top:807px;" width="32" height="32" viewBox="0 0 32 32"><path d="M7.8 3.1L27.8 15L7.8 27Z" fill="#5aa65e"/></svg>
<svg style="left:454px;top:849px;" width="32" height="32" viewBox="0 0 32 32"><path d="M9.8 1.6L16 8.2L22.2 1.6" fill="none" stroke="#5aa65e" stroke-width="3"/><path d="M8 14.2A8 7.6 0 0 1 24 14.2V22A8 7.6 0 0 1 8 22Z" fill="#5aa65e"/><path d="M4 11.9h24M4 18.5h24M4 25.1h24" stroke="#5aa65e" stroke-width="3.2"/><path d="M12 15.4h8M12 21.3h8" stroke="#3c3f41" stroke-width="2.3"/></svg>
<svg style="left:454px;top:891px;" width="34" height="34" viewBox="0 0 34 34"><path d="M1.8 5.2C5.2 5.2 8.6 4.4 12 3H22.1V13.4H17V23L12 27C5.8 24 1.8 18.4 1.8 11Z" fill="#afb1b3"/><path d="M13.4 6.2H19.1V13.4H17V21.6L13.4 24.2Z" fill="#3c3f41"/><path d="M17.8 12.4L31.6 21.2L17.8 30Z" fill="#5aa65e"/></svg>
<svg style="left:454px;top:1094px;" width="32" height="32" viewBox="0 0 32 32"><path transform="scale(2)" d="M12.5747152,11.8852806 C11.4741474,13.1817355 9.83247882,14.0044386 7.99865879,14.0044386 C5.03907292,14.0044386 2.57997332,11.8615894 2.08820756,9.0427473 L3.94774327,9.10768372 C4.43372186,10.8898575 6.06393114,12.2000519 8.00015362,12.2000519 C9.30149237,12.2000519 10.4645985,11.6082097 11.2349873,10.6790094 L9.05000019,8.71167959 L14.0500002,8.71167959 L14.0500002,13.2137806 L12.5747152,11.8852806 Z M3.42785637,4.11741586 C4.52839138,2.82452748 6.16775464,2.00443857 7.99865879,2.00443857 C10.918604,2.00443857 13.3513802,4.09026967 13.8882946,6.8532307 L12.0226389,6.78808057 C11.5024872,5.05935553 9.89838095,3.8000774 8.00015362,3.8000774 C6.69867367,3.8000774 5.53545628,4.39204806 4.76506921,5.32142241 L6.95000019,7.28874793 L1.95000019,7.28874793 L1.95000019,2.78664693 L3.42785637,4.11741586 Z" fill="#afb1b3"/></svg>
<svg style="left:454px;top:1155px;" width="32" height="32" viewBox="0 0 32 32"><path d="M13.9 9L22.2 1V7H30.1V11H22.2V17Z" fill="#4a98d2" stroke="#3c3f41" stroke-width="1.6" paint-order="stroke"/><path d="M18.1 21.1L10 13.2V19.1H1.8V23.2H10V29.2Z" fill="#4a98d2" stroke="#3c3f41" stroke-width="1.6" paint-order="stroke"/></svg>
<div style="left:1045.4px;top:19.6px;width:374.6px;height:1330px;background:#3c3f41;box-shadow:0 3px 14px 2px rgba(0,0,0,.42);border:1.3px solid #53575a;box-sizing:border-box"></div>
<span class="t" style="left:1112.30px;top:33.12px;font-size:26.5px;color:#bbbbbb;letter-spacing:0.300px;">C++ Class</span>
<div style="left:1068.3px;top:82px;width:329.5px;height:2px;background:#555555;"></div>
<span class="t" style="left:1112.30px;top:93.12px;font-size:26.5px;color:#bbbbbb;letter-spacing:0.356px;">C/C++ Source File</span>
<span class="t" style="left:1112.30px;top:135.12px;font-size:26.5px;color:#bbbbbb;letter-spacing:0.375px;">C/C++ Header File</span>
<div style="left:1068.3px;top:184px;width:329.5px;height:2px;background:#555555;"></div>
<span class="t" style="left:1112.30px;top:195.12px;font-size:26.5px;color:#bbbbbb;letter-spacing:0.481px;">Kotlin Class/File</span>
<span class="t" style="left:1112.30px;top:237.12px;font-size:26.5px;color:#bbbbbb;letter-spacing:0.337px;">Values Resource File</span>
<span class="t" style="left:1112.30px;top:279.12px;font-size:26.5px;color:#bbbbbb;letter-spacing:0.570px;">Sample Data Directory</span>
<span class="t" style="left:1112.30px;top:321.12px;font-size:26.5px;color:#bbbbbb;letter-spacing:0.000px;">File</span>
<span class="t" style="left:1112.30px;top:363.12px;font-size:26.5px;color:#bbbbbb;letter-spacing:0.582px;">Scratch File</span>
<span class="g" style="left:1324.45px;top:370.54px;font-family:'Noto Sans CJK JP', sans-serif;font-size:27px;line-height:30px;height:30px;color:#bbbbbb;transform-origin:0 0;transform:scale(1.2111,0.7320);-webkit-text-stroke:0.7px #bbbbbb;">⇧</span>
<span class="g" style="left:1353.00px;top:369.49px;font-family:'DejaVu Sans', sans-serif;font-size:27px;line-height:30px;height:30px;color:#bbbbbb;transform-origin:0 0;transform:scale(0.9659,0.9463);-webkit-text-stroke:0.3px #bbbbbb;">⌘</span>
<span class="t" style="left:1378.30px;top:363.12px;font-size:26.5px;color:#bbbbbb;letter-spacing:0.850px;">N</span>
<span class="t" style="left:1112.30px;top:405.12px;font-size:26.5px;color:#bbbbbb;letter-spacing:0.925px;">Directory</span>
<span class="t" style="left:1112.30px;top:447.12px;font-size:26.5px;color:#bbbbbb;letter-spacing:0.600px;">Image Asset</span>
<span class="t" style="left:1112.30px;top:489.12px;font-size:26.5px;color:#bbbbbb;letter-spacing:0.909px;">Vector Asset</span>
<div style="left:1068.3px;top:538px;width:329.5px;height:2px;background:#555555;"></div>
<span class="t" style="left:1112.30px;top:549.12px;font-size:26.5px;color:#bbbbbb;letter-spacing:0.783px;">Kotlin Script</span>
<span class="t" style="left:1112.30px;top:591.12px;font-size:26.5px;color:#bbbbbb;letter-spacing:0.667px;">Kotlin Worksheet</span>
<span class="t" style="left:1112.30px;top:633.12px;font-size:26.5px;color:#bbbbbb;letter-spacing:0.669px;">CMakeLists.txt</span>
<div style="left:1068.3px;top:682px;width:329.5px;height:2px;background:#555555;"></div>
<span class="t" style="left:1112.30px;top:693.12px;font-size:26.5px;color:#bbbbbb;letter-spacing:1.143px;">Activity</span>
<svg style="left:1380.5px;top:702px" width="14" height="22" viewBox="0 0 14 22"><path d="M3 3l8 8-8 8" fill="none" stroke="#afb1b3" stroke-width="2.4"/></svg>
<span class="t" style="left:1112.30px;top:735.12px;font-size:26.5px;color:#bbbbbb;letter-spacing:0.671px;">Fragment</span>
<svg style="left:1380.5px;top:744px" width="14" height="22" viewBox="0 0 14 22"><path d="M3 3l8 8-8 8" fill="none" stroke="#afb1b3" stroke-width="2.4"/></svg>
<span class="t" style="left:1112.30px;top:777.12px;font-size:26.5px;color:#bbbbbb;letter-spacing:0.540px;">Folder</span>
<svg style="left:1380.5px;top:786px" width="14" height="22" viewBox="0 0 14 22"><path d="M3 3l8 8-8 8" fill="none" stroke="#afb1b3" stroke-width="2.4"/></svg>
<span class="t" style="left:1112.30px;top:819.12px;font-size:26.5px;color:#bbbbbb;letter-spacing:0.700px;">Service</span>
<svg style="left:1380.5px;top:828px" width="14" height="22" viewBox="0 0 14 22"><path d="M3 3l8 8-8 8" fill="none" stroke="#afb1b3" stroke-width="2.4"/></svg>
<span class="t" style="left:1112.30px;top:861.12px;font-size:26.5px;color:#bbbbbb;letter-spacing:0.720px;">UiComponent</span>
<svg style="left:1380.5px;top:870px" width="14" height="22" viewBox="0 0 14 22"><path d="M3 3l8 8-8 8" fill="none" stroke="#afb1b3" stroke-width="2.4"/></svg>
<span class="t" style="left:1112.30px;top:903.12px;font-size:26.5px;color:#bbbbbb;letter-spacing:0.878px;">Automotive</span>
<svg style="left:1380.5px;top:912px" width="14" height="22" viewBox="0 0 14 22"><path d="M3 3l8 8-8 8" fill="none" stroke="#afb1b3" stroke-width="2.4"/></svg>
<div style="left:1048.3px;top:944px;width:369.7px;height:41.7px;background:#3d63c5;"></div>
<span class="t" style="left:1112.30px;top:945.12px;font-size:26.5px;color:#ffffff;letter-spacing:0.050px;-webkit-text-stroke:.65px;">XML</span>
<svg style="left:1380.5px;top:954px" width="14" height="22" viewBox="0 0 14 22"><path d="M3 3l8 8-8 8" fill="none" stroke="#ffffff" stroke-width="2.4"/></svg>
<span class="t" style="left:1112.30px;top:987.12px;font-size:26.5px;color:#bbbbbb;letter-spacing:-0.167px;">Wear</span>
<svg style="left:1380.5px;top:996px" width="14" height="22" viewBox="0 0 14 22"><path d="M3 3l8 8-8 8" fill="none" stroke="#afb1b3" stroke-width="2.4"/></svg>
<span class="t" style="left:1112.30px;top:1029.12px;font-size:26.5px;color:#bbbbbb;letter-spacing:-0.100px;">AIDL</span>
<svg style="left:1380.5px;top:1038px" width="14" height="22" viewBox="0 0 14 22"><path d="M3 3l8 8-8 8" fill="none" stroke="#afb1b3" stroke-width="2.4"/></svg>
<span class="t" style="left:1112.30px;top:1071.12px;font-size:26.5px;color:#bbbbbb;letter-spacing:1.080px;">Widget</span>
<svg style="left:1380.5px;top:1080px" width="14" height="22" viewBox="0 0 14 22"><path d="M3 3l8 8-8 8" fill="none" stroke="#afb1b3" stroke-width="2.4"/></svg>
<span class="t" style="left:1112.30px;top:1113.12px;font-size:26.5px;color:#bbbbbb;letter-spacing:0.480px;">Google</span>
<svg style="left:1380.5px;top:1122px" width="14" height="22" viewBox="0 0 14 22"><path d="M3 3l8 8-8 8" fill="none" stroke="#afb1b3" stroke-width="2.4"/></svg>
<span class="t" style="left:1112.30px;top:1155.12px;font-size:26.5px;color:#bbbbbb;letter-spacing:0.567px;">Compose</span>
<svg style="left:1380.5px;top:1164px" width="14" height="22" viewBox="0 0 14 22"><path d="M3 3l8 8-8 8" fill="none" stroke="#afb1b3" stroke-width="2.4"/></svg>
<span class="t" style="left:1112.30px;top:1197.12px;font-size:26.5px;color:#bbbbbb;letter-spacing:0.775px;">Other</span>
<svg style="left:1380.5px;top:1206px" width="14" height="22" viewBox="0 0 14 22"><path d="M3 3l8 8-8 8" fill="none" stroke="#afb1b3" stroke-width="2.4"/></svg>
<span class="t" style="left:1112.30px;top:1239.12px;font-size:26.5px;color:#bbbbbb;letter-spacing:0.457px;">Resource Bundle</span>
<span class="t" style="left:1112.30px;top:1281.12px;font-size:26.5px;color:#bbbbbb;letter-spacing:0.656px;">EditorConfig File</span>
<svg style="left:1072.1px;top:38px;" width="28" height="28" viewBox="0 0 28 28"><rect width="28" height="28" rx="4.6" fill="#9279bf"/><text x="14" y="19.4" text-anchor="middle" font-family="'Liberation Sans',sans-serif" font-weight="700" font-size="15.5" fill="#372a4c">S</text></svg>
<svg style="left:1072px;top:97.8px;" width="31" height="31" viewBox="0 0 31 31"><path d="M14 0H24V14.2H4V10.2H14Z" fill="#8d99a3"/><path d="M12.2 .6V8H4.8Z" fill="#8d99a3"/><rect x="0" y="16.2" width="30.2" height="14.1" fill="#9b82c8"/><text x="3.4" y="28" font-family="'Liberation Sans',sans-serif" font-weight="700" font-size="12.5" fill="#3b2d52">C</text><path d="M13.2 23.3h6M16.2 20.3v6M21.4 23.3h6M24.4 20.3v6" stroke="#3b2d52" stroke-width="1.9"/></svg>
<svg style="left:1072px;top:139.8px;" width="31" height="31" viewBox="0 0 31 31"><path d="M14 0H24V14.2H4V10.2H14Z" fill="#8d99a3"/><path d="M12.2 .6V8H4.8Z" fill="#8d99a3"/><rect x="0" y="16.2" width="30.2" height="14.1" fill="#c29648"/><text x="3.6" y="28.2" font-family="'Liberation Sans',sans-serif" font-weight="700" font-size="12.8" fill="#3d2c0c">H</text></svg>
<svg style="left:1076px;top:200px;" width="27" height="30" viewBox="0 0 27 30"><path d="M10 0H20V14H10V28H0V10H10Z" fill="#8d99a3"/><path d="M8.2 .6V8H.8Z" fill="#8d99a3"/><path d="M12 16H26L19 23L26 30H12Z" fill="#b99bf8"/></svg>
<svg style="left:1072px;top:241.8px;" width="31" height="31" viewBox="0 0 31 31"><path d="M14 0H24V14.2H4V10.2H14Z" fill="#8d99a3"/><path d="M12.2 .6V8H4.8Z" fill="#8d99a3"/><rect x="0" y="16.2" width="30.2" height="14.1" fill="#b5653a"/><path d="M9.8 18.7L4.6 22.9l5.2 4.2M14.4 18.7l5.2 4.2-5.2 4.2" fill="none" stroke="#40220f" stroke-opacity=".8" stroke-width="1.7"/></svg>
<svg style="left:1072px;top:286.4px;" width="29" height="23" viewBox="0 0 29 23"><path d="M0 0H9.7L14 3.7H28.2V22.2H0Z" fill="#8d99a3" fill-rule="evenodd"/></svg>
<svg style="left:1076px;top:326px;overflow:visible;" width="28" height="29" viewBox="0 0 28 29"><path d="M10 0H20V28H0V10H10Z" fill="#8d99a3"/><path d="M8.2 .6V8H.8Z" fill="#8d99a3"/><path d="M4 13h12.3M4 17.6h12.3M4 22.2h8" stroke="#3c3f41" stroke-width="2"/></svg>
<svg style="left:1076px;top:368px;overflow:visible;" width="28" height="29" viewBox="0 0 28 29"><path d="M10 0H20V28H0V10H10Z" fill="#8d99a3"/><path d="M8.2 .6V8H.8Z" fill="#8d99a3"/><path d="M4 13h12.3M4 17.6h12.3M4 22.2h8" stroke="#3c3f41" stroke-width="2"/><circle cx="19" cy="7.4" r="8.6" fill="#3c3f41"/><circle cx="19" cy="7.4" r="7" fill="#40b4e0"/><path d="M19 3.6V7.8L21.6 10.4" fill="none" stroke="#26323a" stroke-width="1.7"/></svg>
<svg style="left:1072px;top:412.4px;" width="29" height="23" viewBox="0 0 29 23"><path d="M0 0H9.7L14 3.7H28.2V22.2H0Z" fill="#8d99a3" fill-rule="evenodd"/></svg>
<svg style="left:1073.8px;top:457.9px;" width="25.2" height="16.9" viewBox="0 0 25.2 16.9"><g transform="scale(1)"><path d="M0 16.4A12.35 12.4 0 0 1 24.7 16.4Z" fill="#6ed78d"/><path d="M4.3 .7L8.4 7.4M20.4 .7L16.3 7.4" stroke="#6ed78d" stroke-width="1.7" stroke-linecap="round"/><circle cx="7.3" cy="11.2" r="1.2" fill="#3c3f41"/><circle cx="17.4" cy="11.2" r="1.2" fill="#3c3f41"/></g></svg>
<svg style="left:1073.8px;top:499.9px;" width="25.2" height="16.9" viewBox="0 0 25.2 16.9"><g transform="scale(1)"><path d="M0 16.4A12.35 12.4 0 0 1 24.7 16.4Z" fill="#6ed78d"/><path d="M4.3 .7L8.4 7.4M20.4 .7L16.3 7.4" stroke="#6ed78d" stroke-width="1.7" stroke-linecap="round"/><circle cx="7.3" cy="11.2" r="1.2" fill="#3c3f41"/><circle cx="17.4" cy="11.2" r="1.2" fill="#3c3f41"/></g></svg>
<svg style="left:1073.8px;top:703.9px;" width="25.2" height="16.9" viewBox="0 0 25.2 16.9"><g transform="scale(1)"><path d="M0 16.4A12.35 12.4 0 0 1 24.7 16.4Z" fill="#6ed78d"/><path d="M4.3 .7L8.4 7.4M20.4 .7L16.3 7.4" stroke="#6ed78d" stroke-width="1.7" stroke-linecap="round"/><circle cx="7.3" cy="11.2" r="1.2" fill="#3c3f41"/><circle cx="17.4" cy="11.2" r="1.2" fill="#3c3f41"/></g></svg>
<svg style="left:1073.8px;top:745.9px;" width="25.2" height="16.9" viewBox="0 0 25.2 16.9"><g transform="scale(1)"><path d="M0 16.4A12.35 12.4 0 0 1 24.7 16.4Z" fill="#6ed78d"/><path d="M4.3 .7L8.4 7.4M20.4 .7L16.3 7.4" stroke="#6ed78d" stroke-width="1.7" stroke-linecap="round"/><circle cx="7.3" cy="11.2" r="1.2" fill="#3c3f41"/><circle cx="17.4" cy="11.2" r="1.2" fill="#3c3f41"/></g></svg>
<svg style="left:1073.8px;top:787.9px;" width="25.2" height="16.9" viewBox="0 0 25.2 16.9"><g transform="scale(1)"><path d="M0 16.4A12.35 12.4 0 0 1 24.7 16.4Z" fill="#6ed78d"/><path d="M4.3 .7L8.4 7.4M20.4 .7L16.3 7.4" stroke="#6ed78d" stroke-width="1.7" stroke-linecap="round"/><circle cx="7.3" cy="11.2" r="1.2" fill="#3c3f41"/><circle cx="17.4" cy="11.2" r="1.2" fill="#3c3f41"/></g></svg>
<svg style="left:1073.8px;top:829.9px;" width="25.2" height="16.9" viewBox="0 0 25.2 16.9"><g transform="scale(1)"><path d="M0 16.4A12.35 12.4 0 0 1 24.7 16.4Z" fill="#6ed78d"/><path d="M4.3 .7L8.4 7.4M20.4 .7L16.3 7.4" stroke="#6ed78d" stroke-width="1.7" stroke-linecap="round"/><circle cx="7.3" cy="11.2" r="1.2" fill="#3c3f41"/><circle cx="17.4" cy="11.2" r="1.2" fill="#3c3f41"/></g></svg>
<svg style="left:1073.8px;top:871.9px;" width="25.2" height="16.9" viewBox="0 0 25.2 16.9"><g transform="scale(1)"><path d="M0 16.4A12.35 12.4 0 0 1 24.7 16.4Z" fill="#6ed78d"/><path d="M4.3 .7L8.4 7.4M20.4 .7L16.3 7.4" stroke="#6ed78d" stroke-width="1.7" stroke-linecap="round"/><circle cx="7.3" cy="11.2" r="1.2" fill="#3c3f41"/><circle cx="17.4" cy="11.2" r="1.2" fill="#3c3f41"/></g></svg>
<svg style="left:1073.8px;top:913.9px;" width="25.2" height="16.9" viewBox="0 0 25.2 16.9"><g transform="scale(1)"><path d="M0 16.4A12.35 12.4 0 0 1 24.7 16.4Z" fill="#6ed78d"/><path d="M4.3 .7L8.4 7.4M20.4 .7L16.3 7.4" stroke="#6ed78d" stroke-width="1.7" stroke-linecap="round"/><circle cx="7.3" cy="11.2" r="1.2" fill="#3c3f41"/><circle cx="17.4" cy="11.2" r="1.2" fill="#3c3f41"/></g></svg>
<svg style="left:1073.8px;top:955.9px;" width="25.2" height="16.9" viewBox="0 0 25.2 16.9"><g transform="scale(1)"><path d="M0 16.4A12.35 12.4 0 0 1 24.7 16.4Z" fill="#6ed78d"/><path d="M4.3 .7L8.4 7.4M20.4 .7L16.3 7.4" stroke="#6ed78d" stroke-width="1.7" stroke-linecap="round"/><circle cx="7.3" cy="11.2" r="1.2" fill="#3d63c5"/><circle cx="17.4" cy="11.2" r="1.2" fill="#3d63c5"/></g></svg>
<svg style="left:1073.8px;top:997.9px;" width="25.2" height="16.9" viewBox="0 0 25.2 16.9"><g transform="scale(1)"><path d="M0 16.4A12.35 12.4 0 0 1 24.7 16.4Z" fill="#6ed78d"/><path d="M4.3 .7L8.4 7.4M20.4 .7L16.3 7.4" stroke="#6ed78d" stroke-width="1.7" stroke-linecap="round"/><circle cx="7.3" cy="11.2" r="1.2" fill="#3c3f41"/><circle cx="17.4" cy="11.2" r="1.2" fill="#3c3f41"/></g></svg>
<svg style="left:1073.8px;top:1039.9px;" width="25.2" height="16.9" viewBox="0 0 25.2 16.9"><g transform="scale(1)"><path d="M0 16.4A12.35 12.4 0 0 1 24.7 16.4Z" fill="#6ed78d"/><path d="M4.3 .7L8.4 7.4M20.4 .7L16.3 7.4" stroke="#6ed78d" stroke-width="1.7" stroke-linecap="round"/><circle cx="7.3" cy="11.2" r="1.2" fill="#3c3f41"/><circle cx="17.4" cy="11.2" r="1.2" fill="#3c3f41"/></g></svg>
<svg style="left:1073.8px;top:1081.9px;" width="25.2" height="16.9" viewBox="0 0 25.2 16.9"><g transform="scale(1)"><path d="M0 16.4A12.35 12.4 0 0 1 24.7 16.4Z" fill="#6ed78d"/><path d="M4.3 .7L8.4 7.4M20.4 .7L16.3 7.4" stroke="#6ed78d" stroke-width="1.7" stroke-linecap="round"/><circle cx="7.3" cy="11.2" r="1.2" fill="#3c3f41"/><circle cx="17.4" cy="11.2" r="1.2" fill="#3c3f41"/></g></svg>
<svg style="left:1073.8px;top:1123.9px;" width="25.2" height="16.9" viewBox="0 0 25.2 16.9"><g transform="scale(1)"><path d="M0 16.4A12.35 12.4 0 0 1 24.7 16.4Z" fill="#6ed78d"/><path d="M4.3 .7L8.4 7.4M20.4 .7L16.3 7.4" stroke="#6ed78d" stroke-width="1.7" stroke-linecap="round"/><circle cx="7.3" cy="11.2" r="1.2" fill="#3c3f41"/><circle cx="17.4" cy="11.2" r="1.2" fill="#3c3f41"/></g></svg>
<svg style="left:1073.8px;top:1165.9px;" width="25.2" height="16.9" viewBox="0 0 25.2 16.9"><g transform="scale(1)"><path d="M0 16.4A12.35 12.4 0 0 1 24.7 16.4Z" fill="#6ed78d"/><path d="M4.3 .7L8.4 7.4M20.4 .7L16.3 7.4" stroke="#6ed78d" stroke-width="1.7" stroke-linecap="round"/><circle cx="7.3" cy="11.2" r="1.2" fill="#3c3f41"/><circle cx="17.4" cy="11.2" r="1.2" fill="#3c3f41"/></g></svg>
<svg style="left:1073.8px;top:1207.9px;" width="25.2" height="16.9" viewBox="0 0 25.2 16.9"><g transform="scale(1)"><path d="M0 16.4A12.35 12.4 0 0 1 24.7 16.4Z" fill="#6ed78d"/><path d="M4.3 .7L8.4 7.4M20.4 .7L16.3 7.4" stroke="#6ed78d" stroke-width="1.7" stroke-linecap="round"/><circle cx="7.3" cy="11.2" r="1.2" fill="#3c3f41"/><circle cx="17.4" cy="11.2" r="1.2" fill="#3c3f41"/></g></svg>
<svg style="left:1073.9px;top:553.8px;" width="29" height="31" viewBox="0 0 29 31"><path d="M3.2 0H22.6C24.6 2.6 24.9 5.4 23.6 8.2C22.8 10 22.5 12 23.2 14H12.2V28.2H1.4C-.4 25.4 -.4 22.4 1 19.6C3 15.6 3.4 11 2.2 6.6C1.6 4.4 2 2 3.2 0Z" fill="#8d99a3"/><path d="M14.2 16H28L21 23L28 30H14.2Z" fill="#b99bf8"/></svg>
<svg style="left:1073.9px;top:595.8px;" width="29" height="31" viewBox="0 0 29 31"><path d="M3.2 0H22.6C24.6 2.6 24.9 5.4 23.6 8.2C22.8 10 22.5 12 23.2 14H12.2V28.2H1.4C-.4 25.4 -.4 22.4 1 19.6C3 15.6 3.4 11 2.2 6.6C1.6 4.4 2 2 3.2 0Z" fill="#8d99a3"/><path d="M14.2 16H28L21 23L28 30H14.2Z" fill="#b99bf8"/></svg>
<svg style="left:1071.5px;top:637.4px;" width="30" height="29.5" viewBox="0 0 30 29.5"><defs><linearGradient id="cmb" x1="1" y1="0" x2="0" y2="1"><stop offset=".15" stop-color="#6d76e4"/><stop offset="1" stop-color="#1611a4"/></linearGradient><linearGradient id="cmr" x1="0" y1="0" x2="1" y2="1"><stop offset="0" stop-color="#c4443a"/><stop offset="1" stop-color="#f0625a"/></linearGradient></defs><path d="M14.2 .1L0 28.6L9.8 20L15.9 14.2Z" fill="url(#cmb)"/><path d="M14.2 .1L29.3 28.6L16.7 22.4Z" fill="url(#cmr)"/><path d="M0 28.9H29.3L9.8 19.8Z" fill="#66e240"/></svg>
<svg style="left:1076px;top:1244px;" width="27" height="31" viewBox="0 0 27 31"><path d="M10 0H20V12H14V16H8V28H0V10H10Z" fill="#8d99a3"/><path d="M8.2 .6V8H.8Z" fill="#8d99a3"/><rect x="10" y="20" width="4" height="10" fill="#e8703a"/><rect x="16" y="16" width="4" height="14" fill="#f0b24b"/><rect x="22" y="12.2" width="4" height="17.8" fill="#6caa46"/></svg>
<svg style="left:1073px;top:1287px;" width="26.5" height="26.5" viewBox="0 0 26.5 26.5"><path d="M10.10 4.58L10.11 0.94L15.89 0.94L15.90 4.58L18.84 6.28L21.99 4.46L24.89 9.48L21.74 11.30L21.74 14.70L24.89 16.52L21.99 21.54L18.84 19.72L15.90 21.42L15.89 25.06L10.11 25.06L10.10 21.42L7.16 19.72L4.01 21.54L1.11 16.52L4.26 14.70L4.26 11.30L1.11 9.48L4.01 4.46L7.16 6.28ZM17.60 13.00a4.6 4.6 0 1 0 -9.2 0a4.6 4.6 0 1 0 9.2 0Z" fill="#85909a" fill-rule="evenodd" stroke="#85909a" stroke-width="1" stroke-linejoin="round"/></svg>
<div style="left:1417.8px;top:931.8px;width:526.2px;height:191.7px;background:#3c3f41;box-shadow:0 3px 14px 2px rgba(0,0,0,.42);border:1.3px solid #53575a;box-sizing:border-box"></div>
<span class="t" style="left:1484.50px;top:945.12px;font-size:26.5px;color:#bbbbbb;letter-spacing:0.784px;">App Actions XML File (deprecated)</span>
<span class="t" style="left:1484.50px;top:987.12px;font-size:26.5px;color:#bbbbbb;letter-spacing:0.486px;">Layout XML File</span>
<span class="t" style="left:1484.50px;top:1029.12px;font-size:26.5px;color:#bbbbbb;letter-spacing:0.729px;">Shortcuts XML File</span>
<div style="left:1420.3px;top:1069.7px;width:521.8px;height:41.8px;background:#3d63c5;"></div>
<span class="t" style="left:1484.50px;top:1071.12px;font-size:26.5px;color:#ffffff;letter-spacing:0.407px;-webkit-text-stroke:.65px;">Values XML File</span>
<svg style="left:1447.9px;top:949.9px;overflow:visible;" width="28" height="32" viewBox="0 0 28 32"><path d="M10 0H20V28H0V10H10Z" fill="#8d99a3"/><path d="M8.2 .6V8H.8Z" fill="#8d99a3"/><g transform="translate(9.8 19)"><path d="M-1.6 12.8A9.8 9.9 0 0 1 18 12.8Z" fill="#3c3f41"/><path d="M2.8 .5L5.4 4.8M13.6 .5L11 4.8" stroke="#3c3f41" stroke-width="4.6" stroke-linecap="round"/><path d="M0 11.2A8.2 8.2 0 0 1 16.4 11.2Z" fill="#6ed78d"/><path d="M2.8 .5L5.4 4.8M13.6 .5L11 4.8" stroke="#6ed78d" stroke-width="1.5" stroke-linecap="round"/></g></svg>
<svg style="left:1447.9px;top:991.9px;overflow:visible;" width="28" height="32" viewBox="0 0 28 32"><path d="M10 0H20V28H0V10H10Z" fill="#8d99a3"/><path d="M8.2 .6V8H.8Z" fill="#8d99a3"/><g transform="translate(9.8 19)"><path d="M-1.6 12.8A9.8 9.9 0 0 1 18 12.8Z" fill="#3c3f41"/><path d="M2.8 .5L5.4 4.8M13.6 .5L11 4.8" stroke="#3c3f41" stroke-width="4.6" stroke-linecap="round"/><path d="M0 11.2A8.2 8.2 0 0 1 16.4 11.2Z" fill="#6ed78d"/><path d="M2.8 .5L5.4 4.8M13.6 .5L11 4.8" stroke="#6ed78d" stroke-width="1.5" stroke-linecap="round"/></g></svg>
<svg style="left:1447.9px;top:1033.9px;overflow:visible;" width="28" height="32" viewBox="0 0 28 32"><path d="M10 0H20V28H0V10H10Z" fill="#8d99a3"/><path d="M8.2 .6V8H.8Z" fill="#8d99a3"/><g transform="translate(9.8 19)"><path d="M-1.6 12.8A9.8 9.9 0 0 1 18 12.8Z" fill="#3c3f41"/><path d="M2.8 .5L5.4 4.8M13.6 .5L11 4.8" stroke="#3c3f41" stroke-width="4.6" stroke-linecap="round"/><path d="M0 11.2A8.2 8.2 0 0 1 16.4 11.2Z" fill="#6ed78d"/><path d="M2.8 .5L5.4 4.8M13.6 .5L11 4.8" stroke="#6ed78d" stroke-width="1.5" stroke-linecap="round"/></g></svg>
<svg style="left:1447.9px;top:1075.9px;overflow:visible;" width="28" height="32" viewBox="0 0 28 32"><path d="M10 0H20V28H0V10H10Z" fill="#8d99a3"/><path d="M8.2 .6V8H.8Z" fill="#8d99a3"/><g transform="translate(9.8 19)"><path d="M-1.6 12.8A9.8 9.9 0 0 1 18 12.8Z" fill="#3d63c5"/><path d="M2.8 .5L5.4 4.8M13.6 .5L11 4.8" stroke="#3d63c5" stroke-width="4.6" stroke-linecap="round"/><path d="M0 11.2A8.2 8.2 0 0 1 16.4 11.2Z" fill="#6ed78d"/><path d="M2.8 .5L5.4 4.8M13.6 .5L11 4.8" stroke="#6ed78d" stroke-width="1.5" stroke-linecap="round"/></g></svg>
</div></body></html>
